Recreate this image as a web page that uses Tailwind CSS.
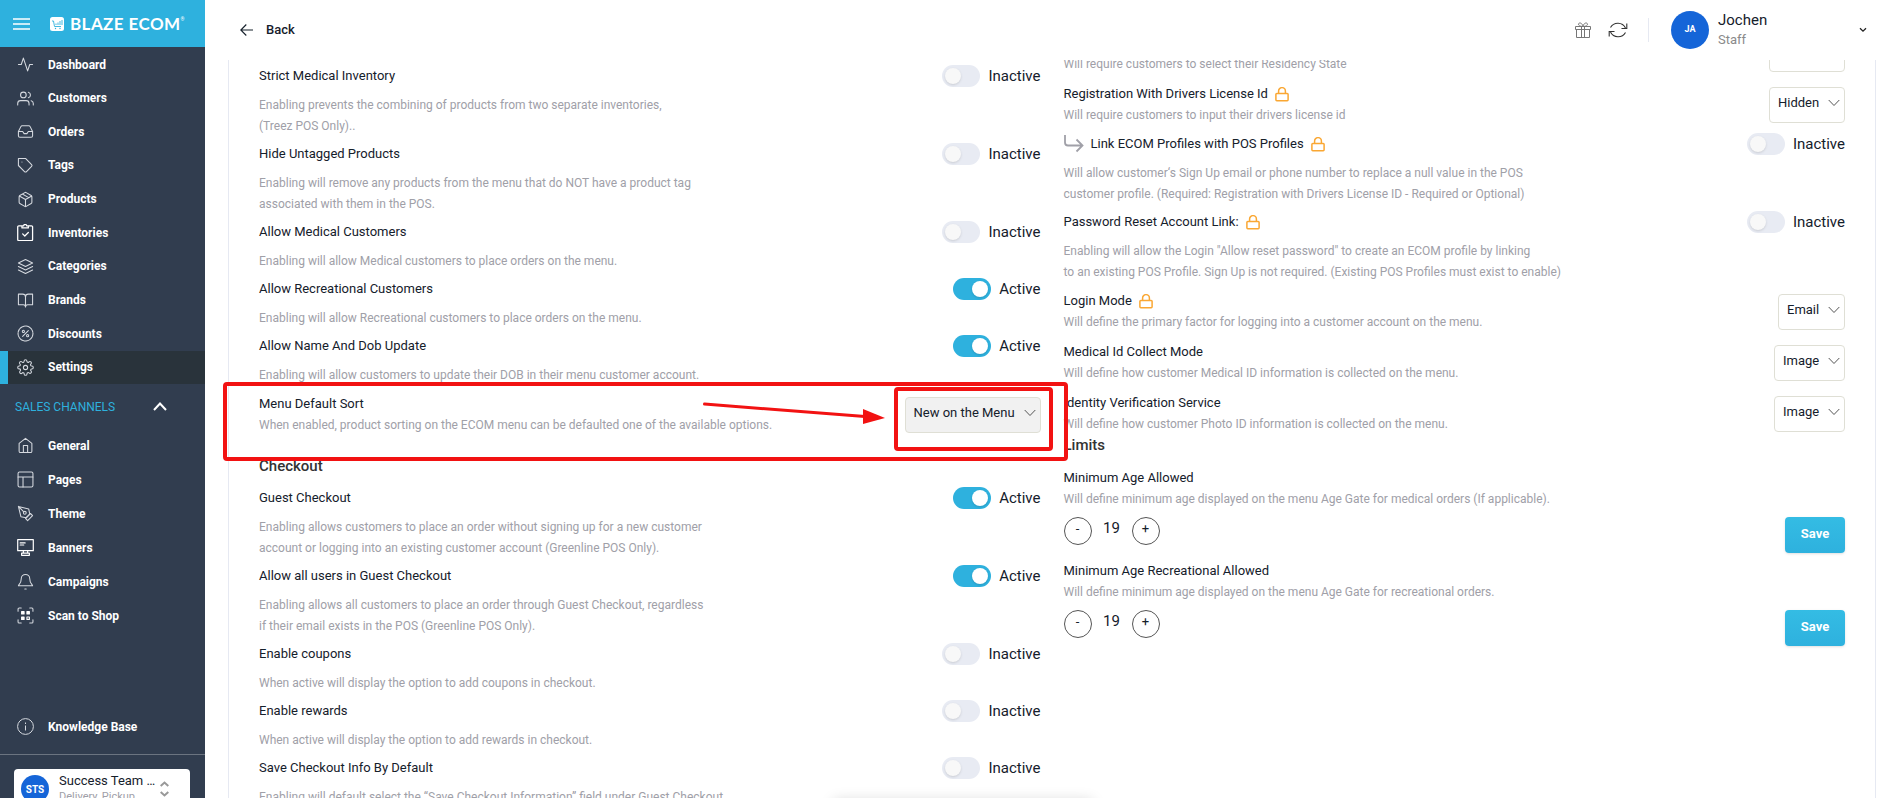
<!DOCTYPE html>
<html lang="en">
  <head>
    <meta charset="UTF-8" />
    <meta name="viewport" content="width=device-width, initial-scale=1.0" />
    <title>Blaze Ecom - Settings</title>
    <script src="https://cdn.jsdelivr.net/npm/@tailwindcss/browser@4"></script>
  </head>
  <body class="flex h-screen overflow-hidden bg-white font-['Roboto',sans-serif] text-[13px] text-[#15202b]">
    <!-- shared icons -->
    <svg class="hidden">
      <symbol id="lock" viewBox="0 0 14 15">
        <path d="M1.8 6.5h10.4a.9.9 0 0 1 .9.9v5.4a.9.9 0 0 1-.9.9H1.8a.9.9 0 0 1-.9-.9V7.4a.9.9 0 0 1 .9-.9zM3.6 6.3V4a3.3 3.3 0 0 1 6.8 0v2.3" fill="none" stroke="#faa733" stroke-width="1.5" />
      </symbol>
      <symbol id="chevron" viewBox="0 0 12 8">
        <path d="M.7 1 6 6.5 11.3 1" fill="none" stroke="#555" stroke-width="1" />
      </symbol>
    </svg>

    <aside class="flex w-[205px] shrink-0 flex-col overflow-hidden bg-[#313d4f] text-white">
      <div class="flex h-[47px] shrink-0 items-center bg-[#2eb1de] pl-[13px]">
        <button type="button" aria-label="Toggle menu">
          <svg width="17" height="12" viewBox="0 0 17 12" stroke="#fff" stroke-width="1.5"><path d="M0 1h17M0 6h17M0 11h17" /></svg>
        </button>
        <svg class="ml-5 shrink-0" width="14" height="14" viewBox="0 0 14 14">
          <rect width="14" height="14" rx="2.5" fill="#fff" />
          <path d="M2 4h1.5l1 5.500H11M6 8V6.500M8 8V5.500M10 8V4M12 8V3" fill="none" stroke="#2eb1de" stroke-width=".9" />
          <circle cx="5.5" cy="11.5" r=".7" fill="#2eb1de" /><circle cx="10" cy="11.5" r=".7" fill="#2eb1de" />
        </svg>
        <span class="ml-1.5 font-['Lato',sans-serif] text-[17px] leading-5 font-bold tracking-wide whitespace-nowrap">BLAZE ECOM</span>
        <span class="mb-2 text-[5px] leading-none">®</span>
      </div>

      <nav class="flex flex-col pt-px text-xs font-bold">
        <div id="main-nav" class="flex h-[336px] flex-col justify-between"></div>

        <button type="button" class="flex h-[45px] items-center justify-between pr-[38px] pl-[15px] text-xs font-normal text-[#2eb1de]">
          SALES CHANNELS
          <svg width="14" height="9" viewBox="0 0 14 9" fill="none" stroke="#fff" stroke-width="2"><path d="m1 8 6-6.5L13 8" /></svg>
        </button>

        <div id="channel-nav" class="flex h-[203px] flex-col justify-between"></div>

        <a href="#" class="mt-[78px] flex h-[33px] items-center gap-[14px] pl-[17px]">
          <svg width="17" height="17" viewBox="0 0 17 17" fill="none" stroke="#d5d9df" stroke-width="1"><circle cx="8.5" cy="8.5" r="7.9" /><path d="M8.5 7.5v5M8.5 4.5V6" /></svg>
          Knowledge Base
        </a>
      </nav>

      <div class="mt-[11px] border-t border-[#6b7480] pt-[14px] pr-[15px] pl-[14px]">
        <button type="button" class="flex w-full items-start rounded bg-white px-[7px] py-1.5 text-left">
          <span class="flex size-7 shrink-0 items-center justify-center rounded-full bg-[#1565d8] text-[10px] font-bold">STS</span>
          <span class="-mt-0.5 ml-[10px] flex min-w-0 flex-1 flex-col leading-4 whitespace-nowrap">
            <span class="text-[#15202b]">Success Team …</span>
            <span class="text-[11px] text-[#a0a0a8]">Delivery, Pickup</span>
          </span>
          <svg class="mt-1.5 mr-[14px] shrink-0" width="9" height="16" viewBox="0 0 9 16" fill="none" stroke="#999" stroke-width="2"><path d="m.7 5 3.8-3.500L8.3 5M.7 11l3.8 3.500L8.3 11" /></svg>
        </button>
      </div>
    </aside>

    <div class="relative flex min-w-0 flex-1 flex-col">
      <header class="z-20 flex h-[60px] shrink-0 items-center bg-white pr-[22px] pl-[35px]">
        <a href="#" class="flex items-center gap-[13px] font-medium">
          <svg width="13" height="12" viewBox="0 0 13 12" fill="none" stroke="#15202b" stroke-width="1.1"><path d="M13 6H.8M6.3.5.8 6l5.5 5.5" /></svg>
          Back
        </a>
        <button type="button" class="ml-auto" aria-label="Gifts">
          <svg width="16" height="16" viewBox="0 0 16 16" fill="none" stroke="#777" stroke-width="1"><path d="M.5 4.5h15v3H.5zM1.5 7.5v8h13v-8M6.5 4.5v11M9.5 4.5v11M8 4.5C5 4.5 3.5 3.5 3.5 2.2 3.5.5 7 0 8 4.5 9 0 12.5.5 12.5 2.2 12.5 3.5 11 4.5 8 4.5z" /></svg>
        </button>
        <button type="button" class="ml-[17px]" aria-label="Refresh">
          <svg width="20" height="16" viewBox="0 0 20 16" fill="none" stroke="#333" stroke-width="1.1"><path d="M2.5 5.5A8.500 8.500 0 0 1 17.500 6M17.500 10.500A8.500 8.500 0 0 1 2.500 10M18.800 1.500V6.500h-5.300M1.200 14.500V9.500h5.300" /></svg>
        </button>
        <span class="ml-5 h-6 w-px bg-[#e6e9f2]"></span>
        <button type="button" class="ml-[22px] flex w-[196px] items-center text-left">
          <span class="flex size-[38px] items-center justify-center rounded-full bg-[#1565d8] text-[9px] font-bold text-white">JA</span>
          <span class="ml-[9px] flex flex-col">
            <span class="text-[15px] leading-5">Jochen</span>
            <span class="leading-5 text-[#8a8a8a]">Staff</span>
          </span>
          <svg class="ml-auto" width="8" height="6" viewBox="0 0 8 6" fill="none" stroke="#222" stroke-width="1.3"><path d="M1 1.2 4 4.2l3-3" /></svg>
        </button>
      </header>

      <main class="mr-[13px] ml-[23px] min-h-0 flex-1 border-x border-[#e6e9f2] px-[30px]">
        <div class="-mt-[37px] grid grid-cols-2 gap-[23px]">
          <section class="pt-[35px]">
            <div id="menu-rows"></div>

            <div class="relative flex h-[51px] items-start justify-between">
              <div class="pt-[9px]">
                <label for="sort" class="block leading-5">Menu Default Sort</label>
                <p class="pt-px text-xs leading-[21px] text-[#a0a0a8]">When enabled, product sorting on the ECOM menu can be defaulted one of the available options.</p>
              </div>
              <div class="relative mt-3">
                <select id="sort" class="h-9 appearance-none rounded border border-[#dfdfd5] bg-[#f1f1f1] pr-6 pb-1 pl-2">
                  <option>New on the Menu</option>
                </select>
                <svg class="pointer-events-none absolute top-3 right-[5px]" width="12" height="8"><use href="#chevron" /></svg>
              </div>
              <!-- highlight with arrow -->
              <div class="pointer-events-none absolute -top-[3px] -right-[27px] -left-9 z-10 h-[79px] rounded-sm border-4 border-[#f21212]">
                <div class="absolute top-px right-[11px] h-[64px] w-[159px] rounded-sm border-4 border-[#f21212]"></div>
                <svg class="absolute top-3 right-[179px]" width="182" height="26" viewBox="0 0 182 26"><path d="M1.5 6 162 18.5" stroke="#f21212" stroke-width="3" stroke-linecap="round" /><path d="m160 11 22 9-22 6z" fill="#f21212" /></svg>
              </div>
            </div>

            <h2 class="pt-5 pb-1 text-[15px] leading-5 font-medium text-[#333]">Checkout</h2>
            <div id="checkout-rows"></div>
          </section>

          <section class="pt-px">
            <div id="profile-rows"></div>

            <h2 class="text-[15px] leading-5 font-medium text-[#333]">Limits</h2>

            <div class="mt-[13px] h-[93px]">
              <h3 class="leading-5">Minimum Age Allowed</h3>
              <p class="pt-px text-xs leading-[21px] text-[#a0a0a8]">Will define minimum age displayed on the menu Age Gate for medical orders (If applicable).</p>
              <div class="mt-[7px] flex items-start">
                <button type="button" class="size-7 rounded-full border border-[#555] pb-1 leading-5">-</button>
                <span class="w-10 text-center text-[15px] leading-[22px]">19</span>
                <button type="button" class="size-7 rounded-full border border-[#555] pb-1 leading-5">+</button>
                <button type="button" class="ml-auto h-9 w-[60px] rounded-sm bg-linear-to-b from-[#34bce4] to-[#2eb1de] pb-0.5 font-bold text-white shadow-sm">Save</button>
              </div>
            </div>

            <div class="h-[93px]">
              <h3 class="leading-5">Minimum Age Recreational Allowed</h3>
              <p class="pt-px text-xs leading-[21px] text-[#a0a0a8]">Will define minimum age displayed on the menu Age Gate for recreational orders.</p>
              <div class="mt-[7px] flex items-start">
                <button type="button" class="size-7 rounded-full border border-[#555] pb-1 leading-5">-</button>
                <span class="w-10 text-center text-[15px] leading-[22px]">19</span>
                <button type="button" class="size-7 rounded-full border border-[#555] pb-1 leading-5">+</button>
                <button type="button" class="ml-auto h-9 w-[60px] rounded-sm bg-linear-to-b from-[#34bce4] to-[#2eb1de] pb-0.5 font-bold text-white shadow-sm">Save</button>
              </div>
            </div>
          </section>
        </div>
      </main>

      <!-- toast waiting below the fold -->
      <div class="absolute -bottom-[50px] left-[45%] z-20 h-12 w-[260px] -translate-x-1/2 rounded shadow-[0_0_14px_rgba(0,0,0,0.15)]"></div>
    </div>

    <script>
      const lock = '<svg width="14" height="15"><use href="#lock" /></svg>';
      const subArrow =
        '<svg width="20" height="18" viewBox="0 0 20 18" fill="none" stroke="#a0a0a8" stroke-width="1.8"><path d="M1 0v7.5a3 3 0 0 0 3 3h14M12.5 4.5l6 6-6 6" /></svg>';

      const mainNav = [
        ['Dashboard', '<path d="M22 12h-4l-3 9L9 3l-3 9H2" />'],
        ['Customers', '<path d="M17 21v-2a4 4 0 0 0-4-4H5a4 4 0 0 0-4 4v2M23 21v-2a4 4 0 0 0-3-3.87M16 3.13a4 4 0 0 1 0 7.75" /><circle cx="9" cy="7" r="4" />'],
        ['Orders', '<path d="M22 12h-6l-2 3h-4l-2-3H2" /><path d="M5.45 5.11 2 12v6a2 2 0 0 0 2 2h16a2 2 0 0 0 2-2v-6l-3.45-6.89A2 2 0 0 0 16.76 4H7.24a2 2 0 0 0-1.79 1.11z" />'],
        ['Tags', '<path d="m20.59 13.41-7.17 7.17a2 2 0 0 1-2.83 0L2 12V2h10l8.59 8.59a2 2 0 0 1 0 2.82zM7 7h.01" />'],
        ['Products', '<path d="m16.5 9.4-9-5.19M21 16V8a2 2 0 0 0-1-1.73l-7-4a2 2 0 0 0-2 0l-7 4A2 2 0 0 0 3 8v8a2 2 0 0 0 1 1.73l7 4a2 2 0 0 0 2 0l7-4A2 2 0 0 0 21 16zM3.27 6.96 12 12.01l8.73-5.05M12 22.08V12" />'],
        ['Inventories', '<g stroke="#fff" stroke-width="1.8"><path d="M7 2.5H2.500a1.500 1.500 0 0 0-1.500 1.500v18a1.500 1.500 0 0 0 1.500 1.500h18a1.500 1.500 0 0 0 1.500-1.500V4a1.500 1.500 0 0 0-1.500-1.500H16M7 5.500h9V2.500h-2.500a2 2 0 0 0-4 0H7zM8 14l3 3 5-5" /></g>'],
        ['Categories', '<path d="m12 2-10 5 10 5 10-5-10-5zM2 17l10 5 10-5M2 12l10 5 10-5" />'],
        ['Brands', '<path d="M2 3h6a4 4 0 0 1 4 4v14a3 3 0 0 0-3-3H2zM22 3h-6a4 4 0 0 0-4 4v14a3 3 0 0 1 3-3h7z" />'],
        ['Discounts', '<circle cx="12" cy="12" r="10.5" stroke-dasharray="4 1" /><path d="m16 8-8 8" /><circle cx="9" cy="9" r="1.5" /><circle cx="15" cy="15" r="1.5" />'],
        ['Settings', '<circle cx="12" cy="12" r="3" /><path d="M19.4 15a1.65 1.65 0 0 0 .33 1.82l.06.06a2 2 0 0 1-2.83 2.83l-.06-.06a1.65 1.65 0 0 0-2.8 1.17V21a2 2 0 0 1-4 0v-.09a1.65 1.65 0 0 0-2.9-1.1l-.06.06a2 2 0 0 1-2.83-2.83l.06-.06A1.65 1.65 0 0 0 3.2 14H3a2 2 0 0 1 0-4h.09a1.65 1.65 0 0 0 1.1-2.9l-.06-.06a2 2 0 0 1 2.83-2.83l.06.06A1.65 1.65 0 0 0 10 3.2V3a2 2 0 0 1 4 0v.09a1.65 1.65 0 0 0 2.8 1.17l.06-.06a2 2 0 0 1 2.83 2.83l-.06.06A1.65 1.65 0 0 0 20.8 10H21a2 2 0 0 1 0 4h-.09a1.65 1.65 0 0 0-1.51 1z" />', true],
      ];

      const channelNav = [
        ['General', '<path d="m3 9 9-7 9 7v11a2 2 0 0 1-2 2H5a2 2 0 0 1-2-2zM9 22V12h6v10" />'],
        ['Pages', '<rect x="1.5" y="1.5" width="21" height="21" rx="2" /><path d="M1.5 8.5h21M8.5 22.5v-14" />'],
        ['Theme', '<path d="m12 19 7-7 3 3-7 7-3-3z" /><path d="m18 13-1.5-7.5L2 2l3.5 14.5L13 18l5-5zM2 2l7.59 7.59" /><circle cx="11" cy="11" r="2" />'],
        ['Banners', '<path d="M1 1h22v15.500H1zM4.500 5.500h7M4.500 8.500h5M9 17v3M15 17v3M6.500 20h11v3h-11z" stroke="#fff" stroke-width="1.7" />'],
        ['Campaigns', '<path d="M18 8A6 6 0 0 0 6 8c0 7-4 8-4 10h20c0-2-4-3-4-10M13 22.5h-2" />'],
        ['Scan to Shop', '<path d="M1.5 6V3A1.500 1.500 0 0 1 3 1.500h3M18 1.500h3A1.500 1.500 0 0 1 22.500 3v3M22.500 18v3a1.500 1.500 0 0 1-1.500 1.500h-3M6 22.500H3A1.500 1.500 0 0 1 1.500 21v-3" /><path d="M6.500 6.500h3.500V10H6.500zM14 6.500h3.500V10H14zM6.500 14h3.500v3.500H6.500z" fill="#fff" stroke="#fff" /><path d="M14 14h3.500v3.500H14z" stroke="#fff" />'],
      ];

      const menuRows = [
        { id: 'strict', title: 'Strict Medical Inventory', text: 'Enabling prevents the combining of products from two separate inventories,<br />(Treez POS Only)..' },
        { id: 'untagged', title: 'Hide Untagged Products', text: 'Enabling will remove any products from the menu that do NOT have a product tag<br />associated with them in the POS.' },
        { id: 'medical', title: 'Allow Medical Customers', text: 'Enabling will allow Medical customers to place orders on the menu.' },
        { id: 'recreational', title: 'Allow Recreational Customers', text: 'Enabling will allow Recreational customers to place orders on the menu.', on: true },
        { id: 'dob', title: 'Allow Name And Dob Update', text: 'Enabling will allow customers to update their DOB in their menu customer account.', on: true },
      ];

      const checkoutRows = [
        { id: 'guest', title: 'Guest Checkout', text: 'Enabling allows customers to place an order without signing up for a new customer<br />account or logging into an existing customer account (Greenline POS Only).', on: true },
        { id: 'all-guest', title: 'Allow all users in Guest Checkout', text: 'Enabling allows all customers to place an order through Guest Checkout, regardless<br />if their email exists in the POS (Greenline POS Only).', on: true },
        { id: 'coupons', title: 'Enable coupons', text: 'When active will display the option to add coupons in checkout.' },
        { id: 'rewards', title: 'Enable rewards', text: 'When active will display the option to add rewards in checkout.' },
        { id: 'save-info', title: 'Save Checkout Info By Default', text: 'Enabling will default select the “Save Checkout Information” field under Guest Checkout' },
      ];

      const profileRows = [
        { id: 'residency', title: 'Residency State', text: 'Will require customers to select their Residency State', option: 'Hidden' },
        { id: 'license', title: 'Registration With Drivers License Id ' + lock, text: 'Will require customers to input their drivers license id', option: 'Hidden' },
        { id: 'link', title: subArrow + ' Link ECOM Profiles with POS Profiles ' + lock, text: 'Will allow customer‘s Sign Up email or phone number to replace a null value in the POS<br />customer profile. (Required: Registration with Drivers License ID - Required or Optional)' },
        { id: 'reset', title: 'Password Reset Account Link: ' + lock, text: 'Enabling will allow the Login "Allow reset password" to create an ECOM profile by linking<br />to an existing POS Profile. Sign Up is not required. (Existing POS Profiles must exist to enable)' },
        { id: 'login', title: 'Login Mode ' + lock, text: 'Will define the primary factor for logging into a customer account on the menu.', option: 'Email' },
        { id: 'medical-id', title: 'Medical Id Collect Mode', text: 'Will define how customer Medical ID information is collected on the menu.', option: 'Image' },
        { id: 'identity', title: 'Identity Verification Service', text: 'Will define how customer Photo ID information is collected on the menu.', option: 'Image' },
      ];

      function navItem([label, icon, active]) {
        const state = active
          ? 'border-l-8 border-[#2eb1de] bg-[#29333b] pl-[9px]'
          : 'pl-[17px]';
        return `
          <a href="#" class="flex h-[33px] items-center gap-[14px] ${state}">
            <svg width="17" height="17" viewBox="0 0 24 24" fill="none" stroke="#d5d9df" stroke-width="1.5" stroke-linecap="round" stroke-linejoin="round">${icon}</svg>
            ${label}
          </a>`;
      }

      function toggleRow(row) {
        return `
          <div class="flex items-start justify-between">
            <div>
              <label for="${row.id}" class="flex items-center gap-[7px] leading-9">${row.title}</label>
              <p class="-mb-px pt-px text-xs leading-[21px] text-[#a0a0a8]">${row.text}</p>
            </div>
            <div class="flex h-9 items-center gap-2 text-[15px]">
              <input id="${row.id}" type="checkbox" ${row.on ? 'checked' : ''} class="h-[22px] w-[38px] appearance-none rounded-full bg-[#e8ebf3] p-[3px] before:block before:size-4 before:rounded-full before:bg-[#f8f8f8] before:shadow before:content-[''] checked:bg-[#2eb1de] checked:before:ml-4 checked:before:bg-white" />
              <span>${row.on ? 'Active' : 'Inactive'}</span>
            </div>
          </div>`;
      }

      function selectRow(row) {
        return `
          <div class="flex h-[51px] items-start justify-between">
            <div class="pt-[9px]">
              <label for="${row.id}" class="flex items-center gap-[7px] leading-5">${row.title}</label>
              <p class="pt-px text-xs leading-[21px] text-[#a0a0a8]">${row.text}</p>
            </div>
            <div class="relative mt-3">
              <select id="${row.id}" class="h-9 appearance-none rounded border border-[#dfdfd5] bg-white pr-6 pb-1 pl-2">
                <option>${row.option}</option>
              </select>
              <svg class="pointer-events-none absolute top-3 right-[5px]" width="12" height="8"><use href="#chevron" /></svg>
            </div>
          </div>`;
      }

      function fill(id, items, render) {
        document.getElementById(id).innerHTML = items.map(render).join('');
      }

      fill('main-nav', mainNav, navItem);
      fill('channel-nav', channelNav, navItem);
      fill('menu-rows', menuRows, toggleRow);
      fill('checkout-rows', checkoutRows, toggleRow);
      fill('profile-rows', profileRows, (row) =>
        row.option ? selectRow(row) : toggleRow(row)
      );
    </script>
  </body>
</html>
